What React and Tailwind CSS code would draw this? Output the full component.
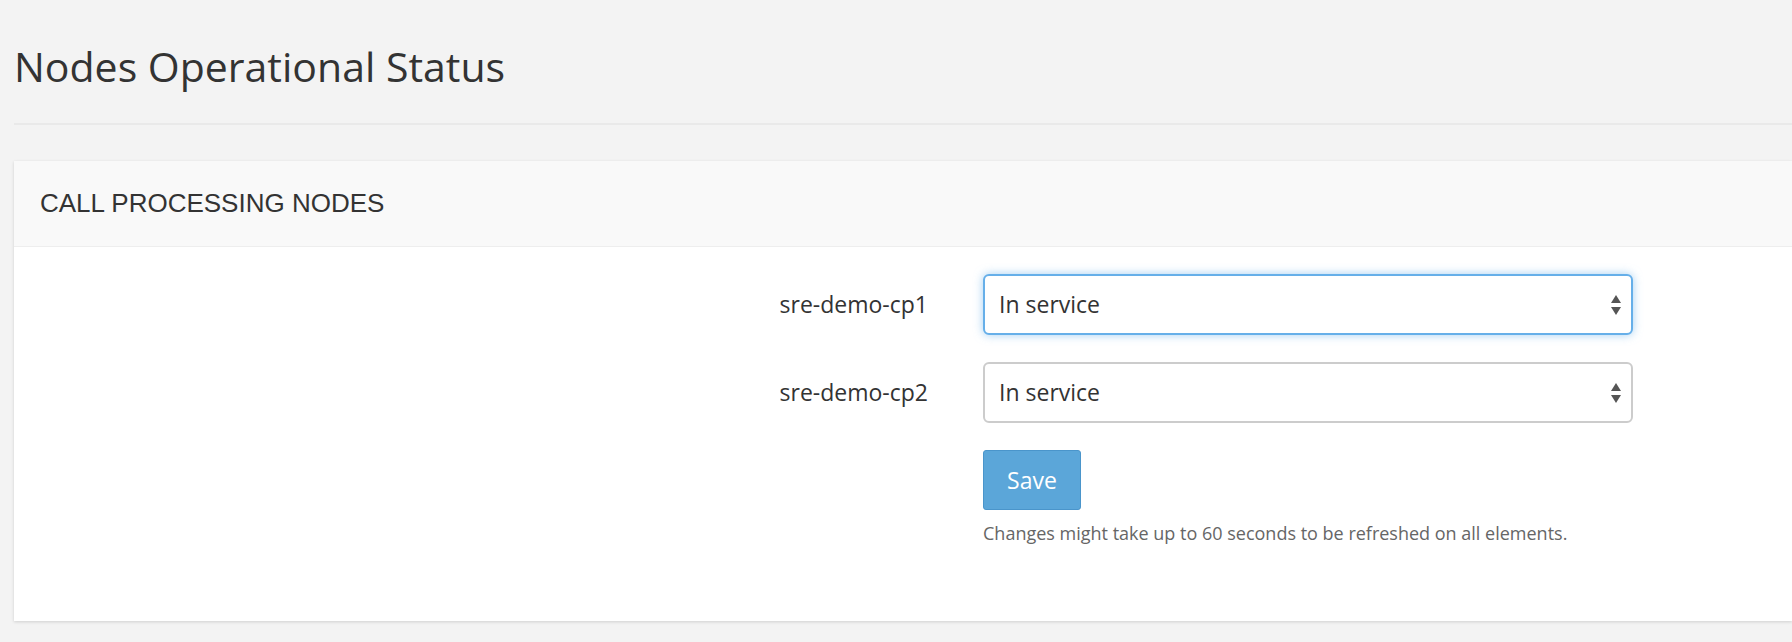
export default function App() {
  const f = { fontFamily: '"Open Sans", "Noto Sans", sans-serif' };
  const sel = (focus) => (
    <div className={`relative w-[650px] h-[61px] rounded-[6px] bg-white flex items-center px-[14px] text-[23px] text-[#333] ${focus ? "border-2 border-[#66afe9] shadow-[0_0_10px_rgba(102,175,233,0.6)]" : "border-2 border-[#ccc]"}`}>
      <span>In service</span>
      <svg className="absolute right-[9px] top-1/2 -translate-y-1/2" width="12" height="24" viewBox="0 0 12 24"><path d="M6 2 L11 10 H1 Z M6 22 L11 14 H1 Z" fill="#555" /></svg>
    </div>
  );
  return (
    <div className="w-[1792px] h-[642px] bg-[#f3f3f3] overflow-hidden text-[#333]" style={f}>
      <div className="pl-[14px]">
        <h1 className="pt-[36px] h-[125px] text-[41px] leading-[60px] border-b-2 border-[#e9e9e9]">Nodes Operational Status</h1>
      </div>
      <div className="ml-[14px] mt-[36px] h-[460px] bg-white shadow-[0_1px_3px_rgba(0,0,0,0.15)]">
        <div className="h-[86px] bg-[#f9f9f9] border-b border-[#eee] flex items-center pl-[26px] text-[26px] text-[#333]" style={{ fontFamily: '"Liberation Sans", Arial, sans-serif' }}>CALL PROCESSING NODES</div>
        <div className="pt-[27px] grid grid-cols-[940px_650px] gap-x-[29px] gap-y-[27px] items-center">
          <div className="text-right text-[23px] pr-[26px]">sre-demo-cp1</div>
          {sel(true)}
          <div className="text-right text-[23px] pr-[26px]">sre-demo-cp2</div>
          {sel(false)}
          <div />
          <div>
            <button className="w-[98px] h-[60px] bg-[#5ba6d9] border border-[#4a95cb] rounded-[3px] text-white text-[23px]">Save</button>
            <p className="mt-[10px] text-[18px] text-[#666]">Changes might take up to 60 seconds to be refreshed on all elements.</p>
          </div>
        </div>
      </div>
    </div>
  );
}
